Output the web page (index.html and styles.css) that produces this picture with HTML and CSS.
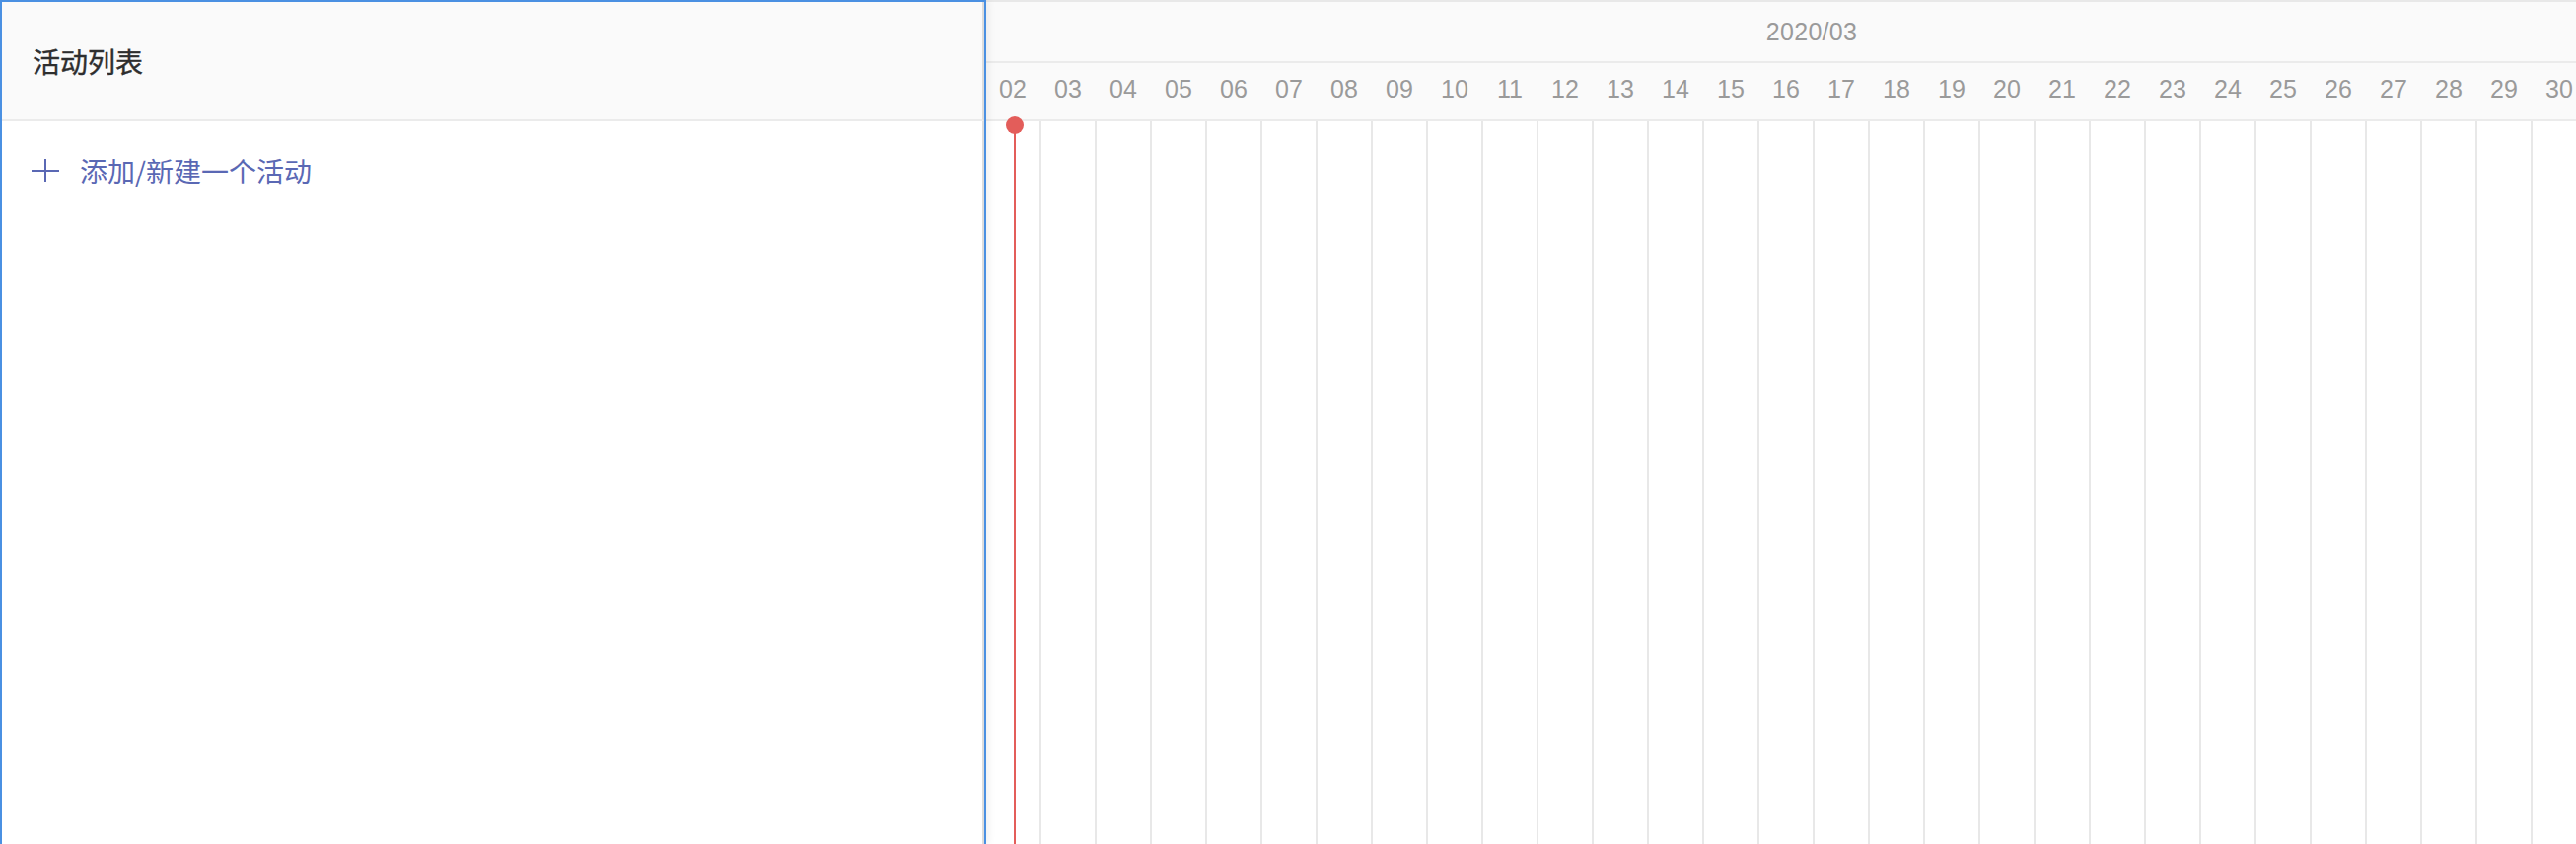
FILE: index.html
```html
<!DOCTYPE html>
<html lang="zh-CN">
<head>
<meta charset="utf-8">
<title>活动列表</title>
<link rel="stylesheet" href="styles.css">
</head>
<body>
<div class="app">
  <aside class="panel">
    <div class="panel-head"><h1 class="panel-title">活动列表</h1></div>
    <div class="panel-body">
      <button class="add" type="button">
        <svg class="add-icon" width="28" height="28" viewBox="0 0 28 28"><path d="M0 14H28M14 2V26" stroke="currentColor" stroke-width="2" fill="none"/></svg>
        <span class="add-text">添加/新建一个活动</span>
      </button>
    </div>
  </aside>
  <section class="timeline">
    <div class="tl-head">
      <div class="month-row"><div class="month">2020/03</div></div>
      <div class="day-row">
        <div class="day">02</div><div class="day">03</div><div class="day">04</div><div class="day">05</div><div class="day">06</div><div class="day">07</div><div class="day">08</div><div class="day">09</div><div class="day">10</div><div class="day">11</div><div class="day">12</div><div class="day">13</div><div class="day">14</div><div class="day">15</div><div class="day">16</div><div class="day">17</div><div class="day">18</div><div class="day">19</div><div class="day">20</div><div class="day">21</div><div class="day">22</div><div class="day">23</div><div class="day">24</div><div class="day">25</div><div class="day">26</div><div class="day">27</div><div class="day">28</div><div class="day">29</div><div class="day">30</div>
      </div>
    </div>
    <div class="tl-body">
      <div class="col"></div><div class="col"></div><div class="col"></div><div class="col"></div><div class="col"></div><div class="col"></div><div class="col"></div><div class="col"></div><div class="col"></div><div class="col"></div><div class="col"></div><div class="col"></div><div class="col"></div><div class="col"></div><div class="col"></div><div class="col"></div><div class="col"></div><div class="col"></div><div class="col"></div><div class="col"></div><div class="col"></div><div class="col"></div><div class="col"></div><div class="col"></div><div class="col"></div><div class="col"></div><div class="col"></div><div class="col"></div><div class="col"></div><div class="col"></div>
      <div class="today"><span class="today-dot"></span></div>
    </div>
  </section>
</div>
</body>
</html>
```
FILE: styles.css
```css
html, body {
  margin: 0;
  padding: 0;
}
body {
  width: 2612px;
  height: 856px;
  overflow: hidden;
  background: #ffffff;
  font-family: "Liberation Sans", "Noto Sans CJK SC", sans-serif;
}
.app {
  display: flex;
  height: 856px;
}
.panel {
  flex: 0 0 1000px;
  box-sizing: border-box;
  border: 2px solid #4a90e2;
  border-bottom: 0;
  background: #ffffff;
  display: flex;
  flex-direction: column;
  position: relative;
  z-index: 2;
  box-shadow: 2px 0 8px rgba(0, 0, 0, 0.07);
}
.panel-head {
  height: 119px;
  flex: 0 0 119px;
  background: #fafafa;
  border-bottom: 2px solid #ebebeb;
  border-right: 2px solid #dddddd;
  padding-left: 31px;
  display: flex;
  align-items: center;
}
.panel-title {
  margin: 0;
  font-size: 28px;
  font-weight: 400;
  color: #2e2e2e;
  font-family: "Noto Sans CJK SC", sans-serif;
  -webkit-text-stroke: 0.4px #2e2e2e;
}
.panel-body {
  flex: 1;
  border-right: 2px solid #dddddd;
  padding: 20px 0 0 30px;
}
.add {
  display: flex;
  align-items: center;
  gap: 21px;
  height: 60px;
  padding: 0;
  border: 0;
  background: transparent;
  color: #5a68b4;
  cursor: pointer;
}
.add-icon {
  display: block;
  flex: 0 0 28px;
}
.add-text {
  font-size: 28px;
  font-family: "Noto Sans CJK SC", sans-serif;
  color: #5a68b4;
}
.timeline {
  flex: 1;
  min-width: 0;
  display: flex;
  flex-direction: column;
  border-top: 2px solid #e8e8e8;
  overflow: hidden;
}
.tl-head {
  background: #fafafa;
  border-bottom: 2px solid #ebebeb;
}
.month-row {
  height: 60px;
  border-bottom: 2px solid #ebebeb;
  display: flex;
}
.month {
  flex: 0 0 1674px;
  display: flex;
  align-items: center;
  justify-content: center;
  font-size: 25px;
  color: #9a9a9a;
  letter-spacing: 0.3px;
}
.day-row {
  height: 57px;
  display: flex;
}
.day {
  flex: 0 0 56px;
  box-sizing: border-box;
  padding: 0 2px 4px 0;
  display: flex;
  align-items: center;
  justify-content: center;
  font-size: 25px;
  color: #9a9a9a;
}
.tl-body {
  flex: 1;
  display: flex;
  position: relative;
}
.col {
  flex: 0 0 56px;
  box-sizing: border-box;
  border-right: 2px solid #e8e8e8;
}
.today {
  position: absolute;
  left: 28px;
  top: 0;
  bottom: 0;
  width: 2px;
  background: #e35d5a;
}
.today-dot {
  position: absolute;
  left: -8px;
  top: -5px;
  width: 18px;
  height: 18px;
  border-radius: 50%;
  background: #e35d5a;
}
```
